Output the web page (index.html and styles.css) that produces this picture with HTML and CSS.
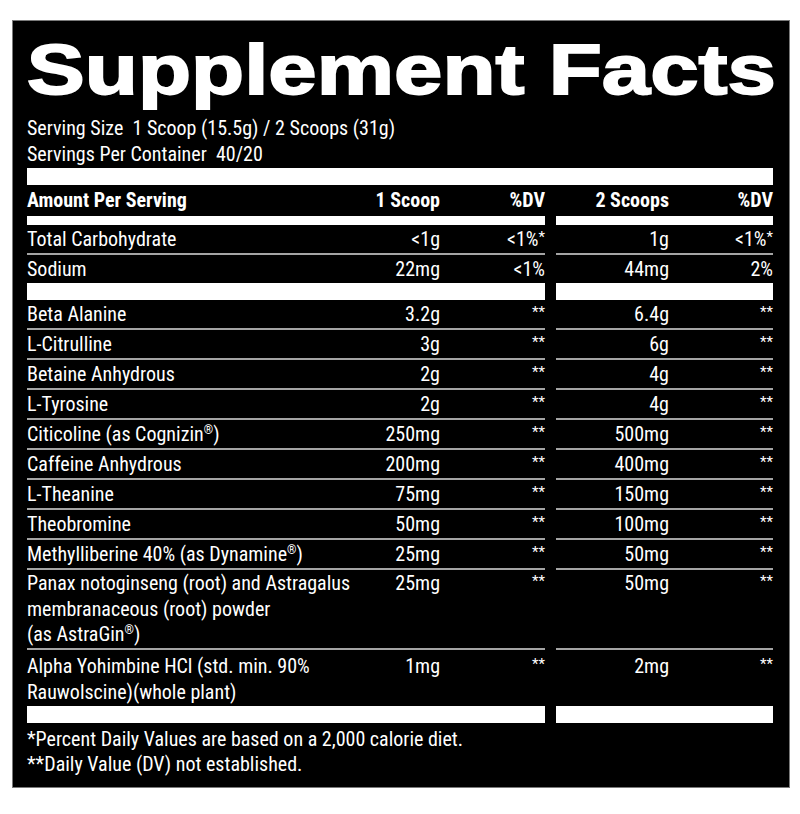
FILE: index.html
```html
<!DOCTYPE html>
<html>
<head>
<meta charset="utf-8">
<link rel="stylesheet" href="styles.css">
</head>
<body>
<div class="panel">
  <h1 class="title">Supplement Facts</h1>
  <div class="serving">
    <div>Serving Size&nbsp; 1 Scoop (15.5g) / 2 Scoops (31g)</div>
    <div>Servings Per Container&nbsp; 40/20</div>
  </div>
  <div class="bar-full"></div>

  <div class="row head">
    <div class="grp left"><span class="name">Amount Per Serving</span><span class="v1">1 Scoop</span><span class="dv">%DV</span></div>
    <div class="grp right"><span class="v2">2 Scoops</span><span class="dv">%DV</span></div>
  </div>
  <div class="split thin"><div class="bar left"></div><div class="bar right"></div></div>

  <div class="row">
    <div class="grp left"><span class="name">Total Carbohydrate</span><span class="v1">&lt;1g</span><span class="dv">&lt;1%<span class="ast">*</span></span></div>
    <div class="grp right"><span class="v2">1g</span><span class="dv">&lt;1%<span class="ast">*</span></span></div>
  </div>
  <div class="row noline">
    <div class="grp left"><span class="name">Sodium</span><span class="v1">22mg</span><span class="dv">&lt;1%</span></div>
    <div class="grp right"><span class="v2">44mg</span><span class="dv">2%</span></div>
  </div>
  <div class="split"><div class="bar left"></div><div class="bar right"></div></div>

  <div class="row">
    <div class="grp left"><span class="name">Beta Alanine</span><span class="v1">3.2g</span><span class="dv"><span class="ast">**</span></span></div>
    <div class="grp right"><span class="v2">6.4g</span><span class="dv"><span class="ast">**</span></span></div>
  </div>
  <div class="row">
    <div class="grp left"><span class="name">L-Citrulline</span><span class="v1">3g</span><span class="dv"><span class="ast">**</span></span></div>
    <div class="grp right"><span class="v2">6g</span><span class="dv"><span class="ast">**</span></span></div>
  </div>
  <div class="row">
    <div class="grp left"><span class="name">Betaine Anhydrous</span><span class="v1">2g</span><span class="dv"><span class="ast">**</span></span></div>
    <div class="grp right"><span class="v2">4g</span><span class="dv"><span class="ast">**</span></span></div>
  </div>
  <div class="row">
    <div class="grp left"><span class="name">L-Tyrosine</span><span class="v1">2g</span><span class="dv"><span class="ast">**</span></span></div>
    <div class="grp right"><span class="v2">4g</span><span class="dv"><span class="ast">**</span></span></div>
  </div>
  <div class="row">
    <div class="grp left"><span class="name">Citicoline (as Cognizin<sup class="reg">®</sup>)</span><span class="v1">250mg</span><span class="dv"><span class="ast">**</span></span></div>
    <div class="grp right"><span class="v2">500mg</span><span class="dv"><span class="ast">**</span></span></div>
  </div>
  <div class="row">
    <div class="grp left"><span class="name">Caffeine Anhydrous</span><span class="v1">200mg</span><span class="dv"><span class="ast">**</span></span></div>
    <div class="grp right"><span class="v2">400mg</span><span class="dv"><span class="ast">**</span></span></div>
  </div>
  <div class="row">
    <div class="grp left"><span class="name">L-Theanine</span><span class="v1">75mg</span><span class="dv"><span class="ast">**</span></span></div>
    <div class="grp right"><span class="v2">150mg</span><span class="dv"><span class="ast">**</span></span></div>
  </div>
  <div class="row">
    <div class="grp left"><span class="name">Theobromine</span><span class="v1">50mg</span><span class="dv"><span class="ast">**</span></span></div>
    <div class="grp right"><span class="v2">100mg</span><span class="dv"><span class="ast">**</span></span></div>
  </div>
  <div class="row">
    <div class="grp left"><span class="name">Methylliberine 40% (as Dynamine<sup class="reg">®</sup>)</span><span class="v1">25mg</span><span class="dv"><span class="ast">**</span></span></div>
    <div class="grp right"><span class="v2">50mg</span><span class="dv"><span class="ast">**</span></span></div>
  </div>
  <div class="row multi three">
    <div class="grp left"><span class="name">Panax notoginseng (root) and Astragalus<br>membranaceous (root) powder<br>(as AstraGin<sup class="reg">®</sup>)</span><span class="v1">25mg</span><span class="dv"><span class="ast">**</span></span></div>
    <div class="grp right"><span class="v2">50mg</span><span class="dv"><span class="ast">**</span></span></div>
  </div>
  <div class="row multi two noline">
    <div class="grp left"><span class="name">Alpha Yohimbine HCl (std. min. 90%<br>Rauwolscine)(whole plant)</span><span class="v1">1mg</span><span class="dv"><span class="ast">**</span></span></div>
    <div class="grp right"><span class="v2">2mg</span><span class="dv"><span class="ast">**</span></span></div>
  </div>
  <div class="split"><div class="bar left"></div><div class="bar right"></div></div>

  <div class="notes">
    <div>*Percent Daily Values are based on a 2,000 calorie diet.</div>
    <div>**Daily Value (DV) not established.</div>
  </div>
</div>
</body>
</html>
```

FILE: styles.css
```css
body {
  margin: 0;
  background: #fff;
}

.panel {
  margin: 20px 0 0 12px;
  width: 778px;
  box-sizing: border-box;
  background: #000;
  border: 1px solid #7a7a7a;
  padding: 13px 16px 10px 14px;
  color: #fff;
  font-family: "Roboto Condensed", "Liberation Sans", Arial, sans-serif;
  font-size: 20px;
}

.title {
  margin: 0;
  width: max-content;
  height: 71px;
  font-family: "Liberation Sans", Arial, sans-serif;
  font-size: 71px;
  line-height: 71px;
  font-weight: 700;
  white-space: nowrap;
  -webkit-text-stroke: 1.8px #fff;
  transform-origin: 1px 0;
  transform: scaleX(1.225);
}

.serving {
  margin-top: 10px;
  line-height: 26px;
}

.bar-full {
  margin-top: 1px;
  height: 17px;
  background: #fff;
}

.row {
  display: flex;
  gap: 11px;
}

.grp {
  display: flex;
  height: 28px;
  line-height: 28px;
  border-bottom: 2px solid #a4a4a4;
  white-space: nowrap;
}

.grp.left {
  flex: 1;
  min-width: 0;
}

.grp.right {
  flex: 0 0 217px;
}

.name {
  flex: 1;
  min-width: 0;
}

.v1 {
  flex: 0 0 80px;
  text-align: right;
}

.v2 {
  flex: 0 0 113px;
  text-align: right;
}

.dv {
  flex: 0 0 105px;
  text-align: right;
}

.grp.right .dv {
  flex-basis: 104px;
}

.row.head .grp {
  height: 31px;
  line-height: 31px;
  border-bottom: none;
  font-weight: 700;
}

.row.noline .grp {
  border-bottom: none;
}

.row.multi .grp {
  height: auto;
}

.row.three .grp {
  line-height: 25.5px;
  padding-top: 1px;
}

.row.two .grp {
  line-height: 26px;
  padding: 3px 0 1.5px;
}

.ast {
  font-size: 15px;
  line-height: 1;
  vertical-align: 4px;
}

.reg {
  font-size: 12px;
  line-height: 1;
  vertical-align: 7px;
}

.split {
  display: flex;
  gap: 11px;
}

.split .bar {
  height: 17px;
  background: #fff;
}

.split.thin .bar {
  height: 9px;
}

.split .bar.left {
  flex: 1;
}

.split .bar.right {
  flex: 0 0 217px;
}

.notes {
  margin-top: 4px;
  line-height: 25px;
}
```
